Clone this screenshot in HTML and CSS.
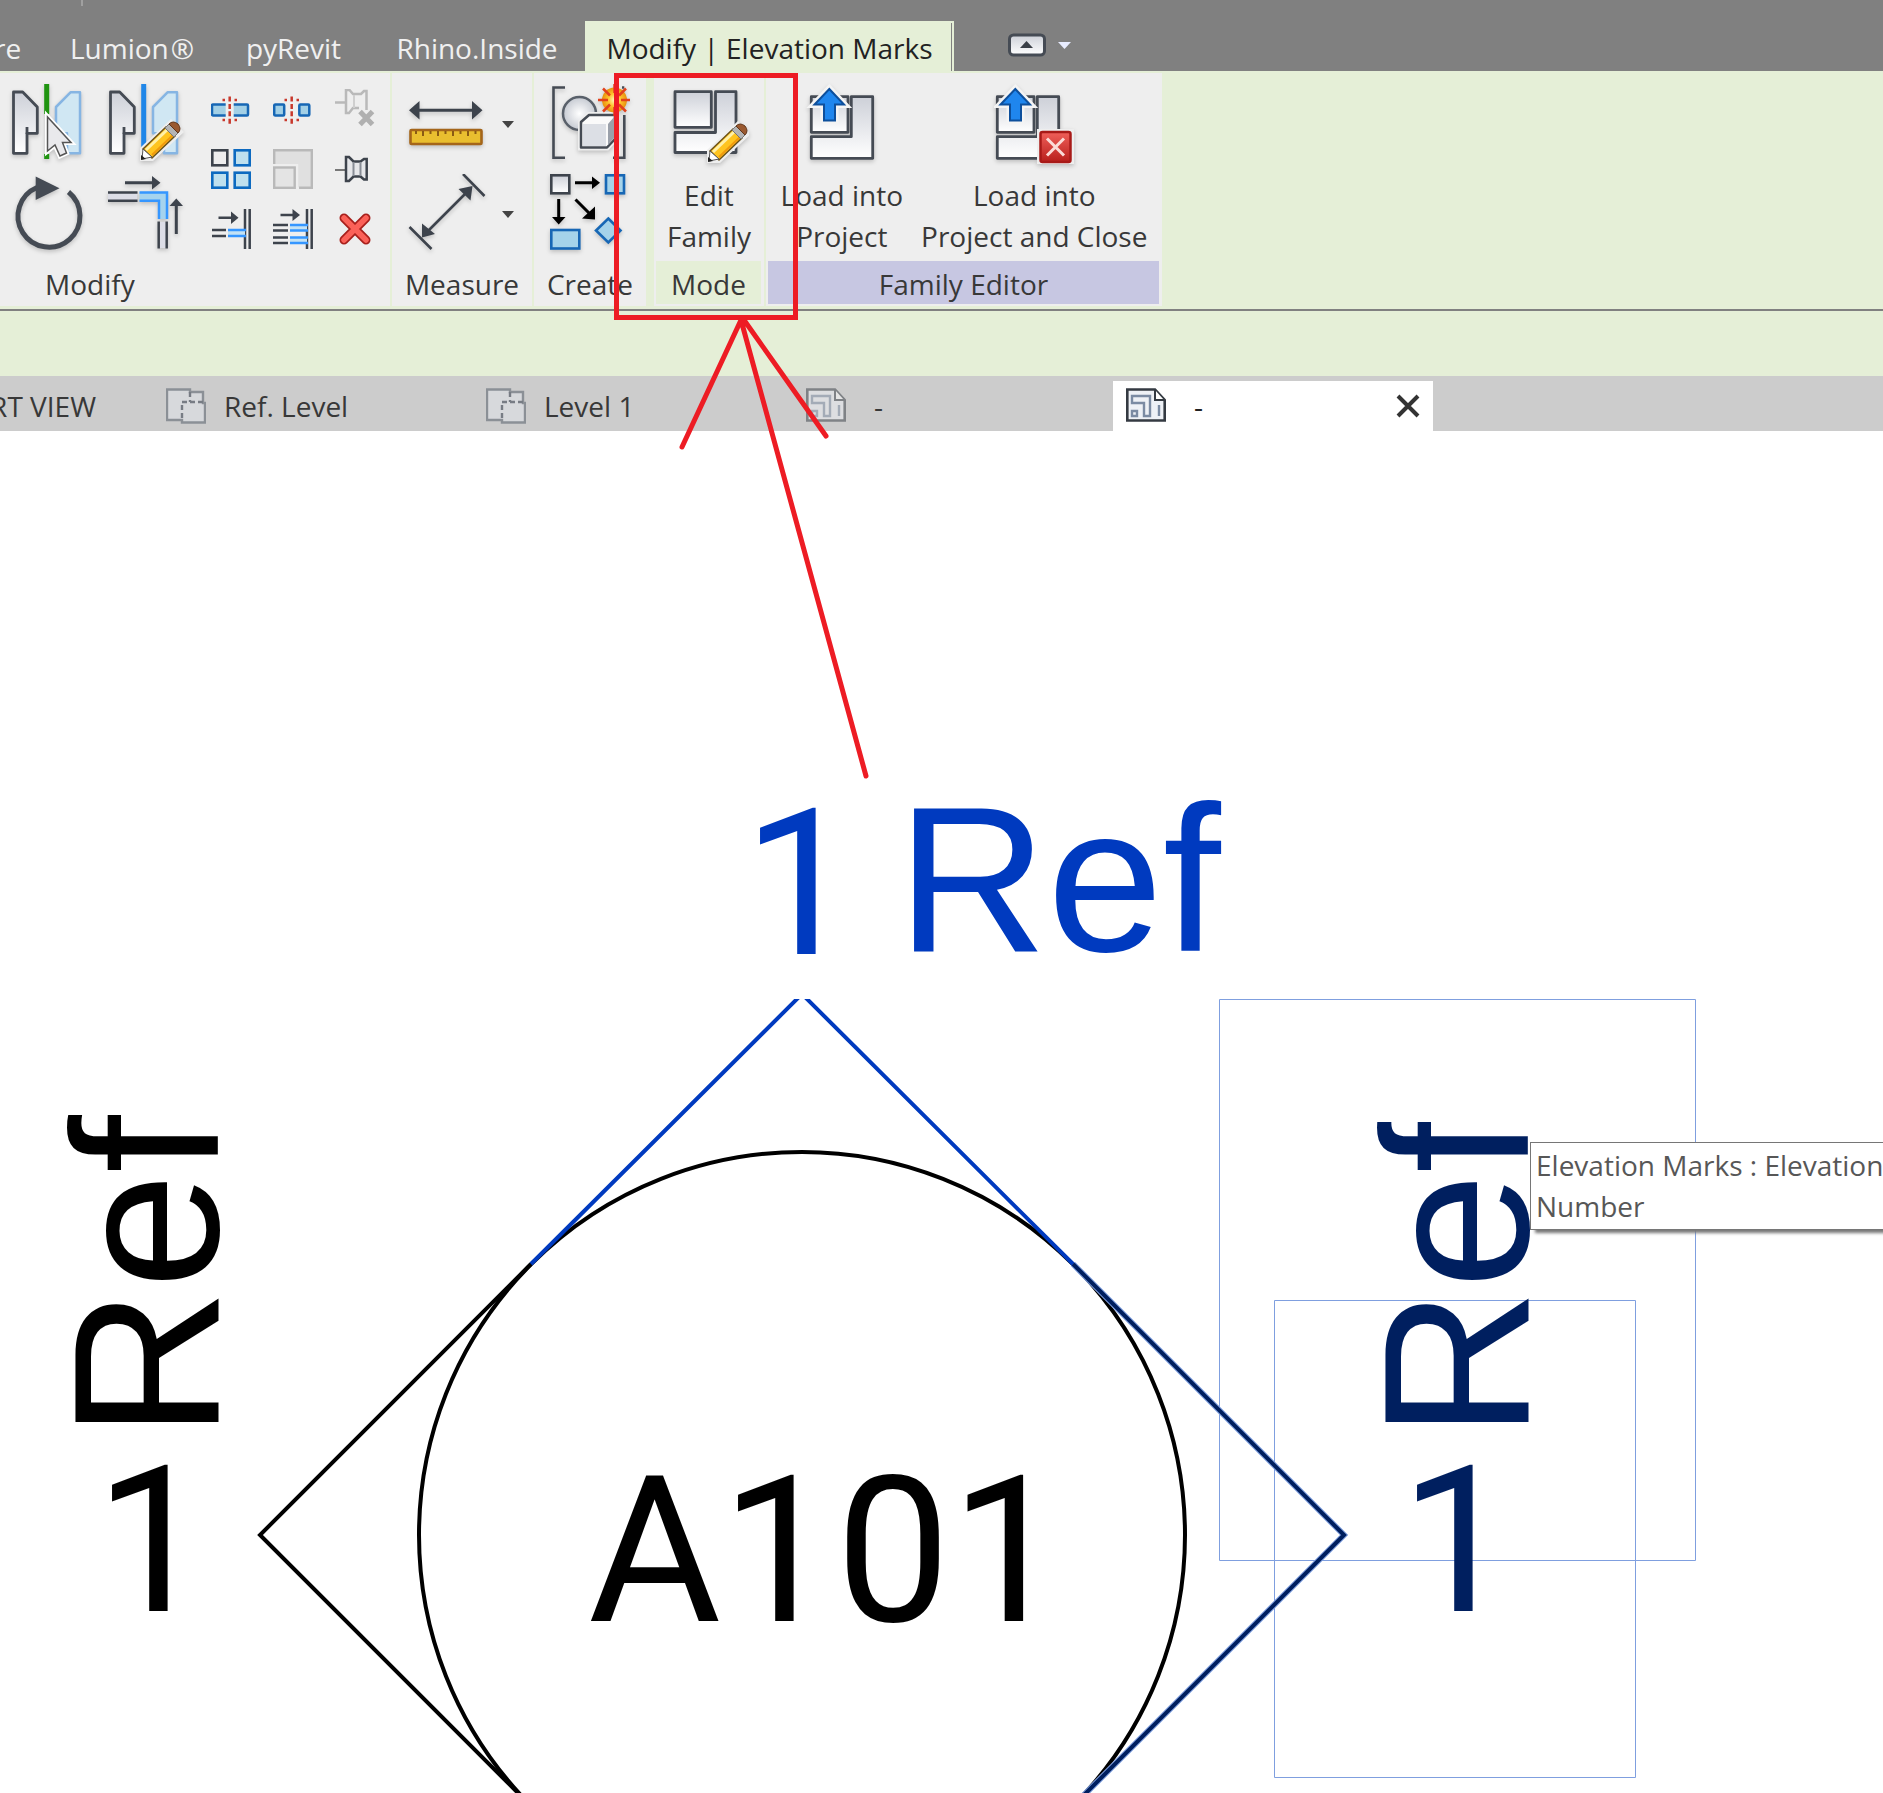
FILE: index.html
```
<!DOCTYPE html>
<html lang="en">
<head>
    <meta charset="UTF-8">
    <title>Elevation Marks</title>
    <link rel="stylesheet" href="styles.css">
</head>
<body>
    <!-- shared gradients and shapes -->
    <svg class="defs" aria-hidden="true">
        <defs>
            <linearGradient id="steel" x1="0" y1="0" x2="0" y2="1">
                <stop offset="0" stop-color="#cdd0d8"/>
                <stop offset="1" stop-color="#fff"/>
            </linearGradient>
            <linearGradient id="red" x1="0" y1="0" x2="0" y2="1">
                <stop offset="0" stop-color="#f0605a"/>
                <stop offset="1" stop-color="#b81f1c"/>
            </linearGradient>
            <radialGradient id="ball">
                <stop offset="0" stop-color="#fff"/>
                <stop offset="1" stop-color="#c6cad2"/>
            </radialGradient>
            <radialGradient id="sun">
                <stop offset="0" stop-color="#ffffc0"/>
                <stop offset="0.5" stop-color="#ffc52e"/>
                <stop offset="1" stop-color="#e8900c"/>
            </radialGradient>
            <g id="pencil">
                <path d="M35 77V64L66 35L79 48L48 77Z" fill="#eee"/>
                <path d="M38 65L61 43L70 52L47 74Z" fill="#ffc41f" stroke="#6b5118" stroke-width="1.500"/>
                <path d="M41 66L63 45" stroke="#fff0a8" stroke-width="3"/>
                <path d="M47 71L68 51" stroke="#f09a0c" stroke-width="2"/>
                <path d="M38 65L47 73L37 75Z" fill="#fff" stroke="#555" stroke-width="1"/>
                <path d="M36 76V71L41 75Z" fill="#222"/>
                <path d="M60 44L64 40L73 49L69 53Z" fill="#b4b4b4" stroke="#777"/>
                <path d="M64 40Q68 36 73 40Q77 45 73 49Z" fill="#9a5930" stroke="#60351a"/>
            </g>
            <g id="mirrorLeft">
                <path d="M5.5 8H14.7L29.3 23V49.3H19V69.3H5.5Z" fill="url(#steel)" stroke="#454b54" stroke-width="2.8" stroke-linejoin="round"/>
                <path d="M19 43V50" stroke="#454b54" stroke-width="2.8"/>
            </g>
            <path id="mirrorRight" d="M48 23L62.5 8.3H72V69.3H59V49.3H48Z" fill="#d0e7f3" stroke="#86b5e3" stroke-width="2.5" stroke-linejoin="round"/>
            <g id="loadArrow">
                <path d="M9.3 12.7H46V48.3H9.3Z" fill="url(#steel)" stroke="#454b54" stroke-width="2.8" stroke-linejoin="round"/>
                <path d="M49.3 12.7H70.7V74.3H9.3V52.7H49.3Z" fill="url(#steel)" stroke="#454b54" stroke-width="2.8" stroke-linejoin="round"/>
                <path d="M27.3 5L42 20.5H33V36.5H22V20.5H12.500Z" fill="#1f86ee" stroke="#f4f4f4" stroke-width="7"/>
                <path d="M27.3 5L42 20.5H33V36.5H22V20.5H12.500Z" fill="#1f86ee" stroke="#0d4f9c" stroke-width="2"/>
            </g>
        </defs>
    </svg>

    <header class="tabs">
        <span class="tick"></span>
        <button class="tab tab-cut">re</button>
        <button class="tab">Lumion<span class="reg">®</span></button>
        <button class="tab">pyRevit</button>
        <button class="tab">Rhino.Inside</button>
        <button class="tab active">Modify | Elevation Marks</button>
        <button class="collapse" aria-label="Collapse ribbon">
            <svg width="63" height="24" viewBox="0 0 63 24">
                <rect x="1.500" y="2" width="35" height="20" rx="4" fill="url(#steel)" stroke="#454b54" stroke-width="3"/>
                <path d="M12 15L18.500 8L25 15Z" fill="#3a3f47"/>
                <path d="M50 9H63L56.500 16Z" fill="#e8ecff"/>
            </svg>
        </button>
    </header>

    <main class="ribbon">
        <section class="panel modify">
            <div class="panel-body">
                <div class="big-icons">
                    <button aria-label="Mirror - Pick Axis">
                        <svg width="80" height="80">
                            <use href="#mirrorLeft"/><use href="#mirrorRight"/>
                            <path d="M38.700 0V30M38.700 70V75" stroke="#1f9410" stroke-width="5"/>
                            <path d="M39.500 33V67L47 61L52 72L58.500 69L54.500 58.500H63Z" fill="#e9e9ec" stroke="#fff" stroke-width="5"/>
                            <path d="M39.500 33V67L47 61L52 72L58.500 69L54.500 58.500H63Z" fill="#e9e9ec" stroke="#555" stroke-width="1.500"/>
                        </svg>
                    </button>
                    <button aria-label="Mirror - Draw Axis">
                        <svg width="80" height="80">
                            <use href="#mirrorLeft"/><use href="#mirrorRight"/>
                            <path d="M38.700 0V66" stroke="#1f86e8" stroke-width="5"/>
                            <use href="#pencil"/>
                        </svg>
                    </button>
                    <button aria-label="Rotate">
                        <svg width="80" height="80">
                            <path d="M60.500 18A31 31 0 1 1 29 13.500" fill="none" stroke="#454b54" stroke-width="5"/>
                            <path d="M27.700 2.500L51.500 14.300L27.700 26Z" fill="#454b54"/>
                        </svg>
                    </button>
                    <button aria-label="Trim/Extend to Corner">
                        <svg width="80" height="80">
                            <path d="M3 19H32V26H3ZM54 48H62V74H54Z" fill="#dcdde6"/>
                            <path d="M3 18.500H32.500M3 26.700H32.500M53.700 47.500V74.500M61.700 47.500V74.500" stroke="#3d434c" stroke-width="2.500"/>
                            <path d="M34.500 18.500H62V45H54V27H34.500Z" fill="#a5d3ee"/>
                            <path d="M34.500 18.500H62V45M34.500 26.700H54V45" fill="none" stroke="#3596ff" stroke-width="2.500"/>
                            <path d="M20 8.700H48M71.300 60V32" stroke="#3d434c" stroke-width="3"/>
                            <path d="M47 2L55.500 8.700L47 15.500ZM64.500 32L71.300 24.500L78 32Z" fill="#3d434c"/>
                        </svg>
                    </button>
                </div>
                <div class="small-icons">
                    <button aria-label="Split Element">
                        <svg width="40" height="40">
                            <rect x="1" y="15.500" width="36" height="11" rx="1" fill="#a3d0e6" stroke="#1767b5" stroke-width="2.500"/>
                            <path d="M18.700 12V30" stroke="#eee" stroke-width="8"/>
                            <path d="M18.700 7.500V35" stroke="#c8382c" stroke-width="2.500" stroke-dasharray="5 2.400"/>
                            <path d="M11.500 11H14M23.500 11H26M11.500 31H14M23.500 31H26" stroke="#c8382c" stroke-width="2.500"/>
                        </svg>
                    </button>
                    <button aria-label="Split with Gap">
                        <svg width="40" height="40">
                            <rect x="1.200" y="15.500" width="10" height="11" rx="1" fill="#a3d0e6" stroke="#1767b5" stroke-width="2.500"/>
                            <rect x="26.300" y="15.500" width="10" height="11" rx="1" fill="#a3d0e6" stroke="#1767b5" stroke-width="2.500"/>
                            <path d="M18.700 7.500V35" stroke="#c8382c" stroke-width="2.500" stroke-dasharray="5 2.400"/>
                            <path d="M11.500 11H14M23.500 11H26M11.500 31H14M23.500 31H26" stroke="#c8382c" stroke-width="2.500"/>
                        </svg>
                    </button>
                    <button aria-label="Unpin" disabled>
                        <svg width="40" height="40">
                            <path d="M0 13.500H10M11 1H14.500L18 5H26L29 2H31.500V21M11 0V24H14L18 19H24" fill="none" stroke="#b9b9b9" stroke-width="2.500"/>
                            <path d="M19 6V19" stroke="#cfcfcf" stroke-width="2"/>
                            <path d="M25 22.500L37.500 35.500M37.500 22.500L25 35.500" stroke="#b0b0b0" stroke-width="5"/>
                        </svg>
                    </button>
                    <button aria-label="Array">
                        <svg width="40" height="40">
                            <rect x="1.300" y="1.300" width="15" height="15" fill="#eee" stroke="#3d434c" stroke-width="2.600"/>
                            <g fill="#bfe0ee" stroke="#0d6ac0" stroke-width="2.600">
                                <rect x="23.700" y="1.300" width="15" height="15"/>
                                <rect x="1.300" y="23.700" width="15" height="15"/>
                                <rect x="23.700" y="23.700" width="15" height="15"/>
                            </g>
                        </svg>
                    </button>
                    <button aria-label="Scale" disabled>
                        <svg width="40" height="40">
                            <path d="M1.200 15V1.200H38.800V38.800H26" fill="#e0e0e0" stroke="#b9b9b9" stroke-width="2.400"/>
                            <rect x="1.200" y="18.500" width="20.500" height="20.300" fill="#e4e4e4" stroke="#eee" stroke-width="7"/>
                            <rect x="1.200" y="18.500" width="20.500" height="20.300" fill="#e4e4e4" stroke="#b9b9b9" stroke-width="2.400"/>
                        </svg>
                    </button>
                    <button aria-label="Pin">
                        <svg width="40" height="40">
                            <path d="M0 21H10" stroke="#777" stroke-width="2"/>
                            <path d="M11 8H14L18.500 12.500H25.500L29 10H31.700V30.500H29L25.500 27.500H18.500L14 32H11Z" fill="#e6e7ea" stroke="#3d434c" stroke-width="2.500"/>
                            <path d="M18.500 13V27M25.500 13V27" stroke="#888d96" stroke-width="2"/>
                        </svg>
                    </button>
                    <button aria-label="Trim/Extend Single Element">
                        <svg width="40" height="40">
                            <path d="M34 0V40M38.700 0V40M1 21H15M1 27H15M7.500 8.700H22" stroke="#3d434c" stroke-width="2.500"/>
                            <path d="M20 2.500L27.500 8.700L20 15Z" fill="#3d434c"/>
                            <path d="M17 20H34V28H17Z" fill="#c3e2f5"/>
                            <path d="M17 21H35M17 27H35" stroke="#3596ff" stroke-width="2.500"/>
                        </svg>
                    </button>
                    <button aria-label="Trim/Extend Multiple Elements">
                        <svg width="40" height="40">
                            <path d="M34 0V40M38.700 0V40M0 16H15M0 21.500H15M0 28.500H15M0 34H15M7.500 6H21" stroke="#3d434c" stroke-width="2.500"/>
                            <path d="M19.500 0L27 6L19.500 12Z" fill="#3d434c"/>
                            <path d="M17 15H34V22H17ZM17 28H34V35H17Z" fill="#c3e2f5"/>
                            <path d="M17 16H35M17 21.500H35M17 28.500H35M17 34H35" stroke="#3596ff" stroke-width="2.500"/>
                        </svg>
                    </button>
                    <button aria-label="Delete">
                        <svg width="40" height="40">
                            <path d="M9 9L31 31M31 9L9 31" stroke="#a8201c" stroke-width="9" stroke-linecap="round"/>
                            <path d="M9 9L31 31M31 9L9 31" stroke="#fb6158" stroke-width="5.500" stroke-linecap="round"/>
                        </svg>
                    </button>
                </div>
            </div>
            <h2 class="panel-title">Modify</h2>
        </section>

        <section class="panel measure">
            <div class="panel-body">
                <button class="split" aria-label="Measure Between Two References">
                    <svg width="80" height="80">
                        <path d="M12 26.300H66" stroke="#3d434c" stroke-width="3"/>
                        <path d="M2 26.300L12.500 17V35.500ZM75.500 26.300L65 17V35.500Z" fill="#3d434c"/>
                        <rect x="3.500" y="46" width="71" height="14" rx="1" fill="#e9be2f" stroke="#a4651a" stroke-width="2.600"/>
                        <path d="M9 47V50M16 47V52M23.500 47V50M31 47V52M38.500 47V50M46 47V52M53.500 47V50M61 47V52M68.500 47V50" stroke="#8a5a14" stroke-width="2"/>
                    </svg>
                    <svg class="drop" width="12" height="7"><path d="M0 0H12L6 7Z" fill="#444"/></svg>
                </button>
                <button class="split" aria-label="Aligned Dimension">
                    <svg width="80" height="80">
                        <path d="M56 0L77.500 22M2.500 53L24.500 75M18 60L62 16" stroke="#3d434c" stroke-width="2.600"/>
                        <path d="M65.500 12L51.500 15L63.500 26.500ZM15 49.500V63.500L28 60Z" fill="#3d434c"/>
                    </svg>
                    <svg class="drop" width="12" height="7"><path d="M0 0H12L6 7Z" fill="#444"/></svg>
                </button>
            </div>
            <h2 class="panel-title">Measure</h2>
        </section>

        <section class="panel create">
            <div class="panel-body">
                <button aria-label="Create Group">
                    <svg width="80" height="80">
                        <path d="M15 3.500H3.500V73.700H15M63 73.700H74.300V31M72 3.500H74.300" fill="none" stroke="#454b54" stroke-width="2.600"/>
                        <circle cx="29.500" cy="29.500" r="16.500" fill="url(#ball)" stroke="#59606a" stroke-width="2.500"/>
                        <path d="M31 38L39 31H65V55L57 63.500H31Z" fill="#e6e8ec" stroke="#eee" stroke-width="6"/>
                        <path d="M31 38L39 31H65V55L57 63.500H31Z" fill="#fafafa" stroke="#454b54" stroke-width="2.500" stroke-linejoin="round"/>
                        <path d="M33 40H56V62H33Z" fill="#dcdfe5"/>
                        <path d="M58 40L64 33V54L58 61Z" fill="#9aa0aa"/>
                        <circle cx="64.500" cy="16" r="12.500" fill="url(#sun)"/>
                        <path d="M64.500 0V9M64.500 23V32M48 16H58M71 16H80M53 4.500L60 11.500M76 4.500L69 11.500M53 27.500L60 20.500M76 27.500L69 20.500" stroke="#e2401c" stroke-width="2.500"/>
                    </svg>
                </button>
                <button aria-label="Create Similar">
                    <svg width="80" height="80">
                        <rect x="1.300" y="1.300" width="18" height="18" fill="url(#steel)" stroke="#3d434c" stroke-width="2.600"/>
                        <g fill="#a5d3ea" stroke="#1767b5" stroke-width="2.600">
                            <rect x="56" y="1.300" width="18" height="18"/>
                            <rect x="1.300" y="56" width="28" height="18.500"/>
                            <path d="M58.300 44.500L70.500 56.500L58.300 68.500L46 56.500Z"/>
                        </g>
                        <path d="M25 8.700H43M8.700 25V44M25.500 25.500L40 40" stroke="#000" stroke-width="3"/>
                        <path d="M42 2.500L50 8.700L42 15ZM2 43H15.500L8.700 50.500ZM45 32.500V45.500L32 44.500Z"/>
                    </svg>
                </button>
            </div>
            <h2 class="panel-title">Create</h2>
        </section>

        <section class="panel mode">
            <div class="panel-body">
                <button class="large">
                    <svg width="80" height="80">
                        <path d="M6 7.700H42.300V43.300H6Z" fill="url(#steel)" stroke="#454b54" stroke-width="2.800" stroke-linejoin="round"/>
                        <path d="M46.500 7.700H67V68.500H6V48.500H46.500Z" fill="url(#steel)" stroke="#454b54" stroke-width="2.800" stroke-linejoin="round"/>
                        <use href="#pencil" x="3" y="2"/>
                    </svg>
                    Edit<br>Family
                </button>
            </div>
            <h2 class="panel-title">Mode</h2>
        </section>

        <section class="panel editor">
            <div class="panel-body">
                <button class="large">
                    <svg width="80" height="80"><use href="#loadArrow"/></svg>
                    Load into<br>Project
                </button>
                <button class="large">
                    <svg width="80" height="80">
                        <use href="#loadArrow" x="-6"/>
                        <rect x="43" y="45" width="37" height="35" fill="#eee"/>
                        <rect x="46.500" y="48" width="30" height="30" rx="2" fill="url(#red)" stroke="#a81a18" stroke-width="2.500"/>
                        <path d="M53 54.500L70 71.500M70 54.500L53 71.500" stroke="#fbdcd8" stroke-width="3"/>
                    </svg>
                    Load into<br>Project and Close
                </button>
            </div>
            <h2 class="panel-title">Family Editor</h2>
        </section>
    </main>

    <div class="options-bar"></div>

    <!-- open views -->
    <nav class="views">
        <button class="view view-cut">RT VIEW</button>
        <button class="view">
            <svg width="40" height="36">
                <path d="M1 1.500H24V4H37V15H39V34.500H16V32H1Z" fill="#d7d9dc" stroke="#8b9096" stroke-width="2.400"/>
                <path d="M24 4V14M37 14H16V32" fill="none" stroke="#777c84" stroke-width="2.400" stroke-dasharray="5 3"/>
            </svg>
            Ref. Level
        </button>
        <button class="view">
            <svg width="40" height="36">
                <path d="M1 1.500H24V4H37V15H39V34.500H16V32H1Z" fill="#d7d9dc" stroke="#8b9096" stroke-width="2.400"/>
                <path d="M24 4V14M37 14H16V32" fill="none" stroke="#777c84" stroke-width="2.400" stroke-dasharray="5 3"/>
            </svg>
            Level 1
        </button>
        <button class="view sheet">
            <svg width="40" height="36" opacity="0.5">
                <path d="M1.300 1.500H29L38.700 12V32.500H1.300Z" fill="#eef1f6" stroke="#343a42" stroke-width="2.600"/>
                <path d="M29 2V12H38" fill="#fff" stroke="#343a42" stroke-width="2"/>
                <path d="M6 8H24V28H18V15H6ZM6 23H11V28H6ZM33 17V28" fill="none" stroke="#7b8ba3" stroke-width="2.400"/>
            </svg>
            -
        </button>
        <div class="view sheet current">
            <svg width="40" height="36">
                <path d="M1.300 1.500H29L38.700 12V32.500H1.300Z" fill="#eef1f6" stroke="#343a42" stroke-width="2.600"/>
                <path d="M29 2V12H38" fill="#fff" stroke="#343a42" stroke-width="2"/>
                <path d="M6 8H24V28H18V15H6ZM6 23H11V28H6ZM33 17V28" fill="none" stroke="#7b8ba3" stroke-width="2.400"/>
            </svg>
            -
            <button class="close" aria-label="Close view">
                <svg width="24" height="24"><path d="M2 2L22 22M22 2L2 22" stroke="#333" stroke-width="4"/></svg>
            </button>
        </div>
    </nav>

    <div class="canvas">
        <svg class="drawing">
            <clipPath id="markClip"><rect x="-600" y="-536" width="1200" height="600"/></clipPath>
            <clipPath id="refClip"><rect x="560" y="-413" width="200" height="400"/></clipPath>
            <!-- origin is the centre of the elevation mark -->
            <g transform="translate(802 1104)">
                <g fill="none" stroke="#7f9fdf">
                    <path d="M417.500 -535.500H893.500V25.500H417.500Z"/>
                    <path d="M472.500 -234.500H833.500V242.500H472.500Z"/>
                </g>
                <circle r="383" fill="none" stroke="#000" stroke-width="4"/>
                <path d="M-271 -271L-542 0L-271 271" fill="none" stroke="#000" stroke-width="4"/>
                <path d="M271 -271L542 0L271 271" fill="none" stroke="#7f9fdf" stroke-width="6"/>
                <path d="M271 -271L542 0L271 271" fill="none" stroke="#001f5f" stroke-width="4"/>
                <path d="M-271 -271L0 -541L271 -271" fill="none" stroke="#003abf" stroke-width="4" clip-path="url(#markClip)"/>

                <text class="digit" x="-214" y="86">A101</text>
                <g class="blue">
                    <text class="digit" x="-59" y="-581">1</text>
                    <text class="ref" x="95" y="-584">Ref</text>
                </g>
                <text class="digit" x="-707" y="76">1</text>
                <text class="ref" transform="translate(-584 -96) rotate(-90)">Ref</text>
                <g class="navy">
                    <text class="digit" x="598" y="76">1</text>
                    <g clip-path="url(#refClip)">
                        <text class="ref" transform="translate(726 -96) rotate(-90)">Ref</text>
                    </g>
                </g>
            </g>
        </svg>
        <div class="tooltip" role="tooltip">Elevation Marks : Elevation<br>Number</div>
    </div>

    <!-- red markup over the ribbon -->
    <svg class="markup">
        <rect x="616.500" y="75.500" width="179" height="242"/>
        <path d="M741 320L682 447M741 320L866 776M744 320L826 436"/>
    </svg>
</body>
</html>
```
FILE: styles.css
```
* { box-sizing: border-box; }
body { margin: 0; height: 100vh; display: flex; flex-direction: column; position: relative; overflow: hidden; background: #fff; color: #383838; font: 28px/41px "Open Sans", "Noto Sans", sans-serif; }
button { background: none; border: 0; padding: 0; margin: 0; color: inherit; font: inherit; cursor: pointer; }
svg { display: block; flex: none; }
.defs { position: absolute; width: 0; height: 0; }

/* ribbon tabs */
.tabs { position: relative; display: grid; grid-template-columns: 46px 172px 151px 216px 369px auto; justify-content: start; height: 71px; padding-top: 21px; background: #808080; }
.tick { position: absolute; left: 81px; top: 0; width: 2px; height: 6px; background: #a0a0a0; }
.tab { padding-top: 4px; color: #f0f0f0; white-space: nowrap; }
.tab-cut { margin-left: -6px; text-align: left; }
.reg { padding-left: 2px; }
.tab.active { position: relative; background: #e5efd7; color: #222; }
.tab.active::after { content: ""; position: absolute; right: 2px; top: 2px; bottom: 0; width: 1px; background: #808080; }
.collapse { padding: 0 0 2px 54px; }

/* ribbon panels */
.ribbon { display: flex; gap: 2px; height: 240px; padding: 2px 0 3px; background: #e5efd7; border-bottom: 2px solid #808080; }
.panel { display: flex; flex-direction: column; height: 233px; background: #eee; }
.panel-body { flex: 1; display: flex; padding-top: 11px; }
.panel-body svg { filter: drop-shadow(0 2px 2px rgba(0, 0, 0, 0.2)); }
.panel-body .small-icons svg, .panel-body .drop { filter: none; }
.panel-title { height: 45px; margin: 0; padding-top: 3px; font-size: 28px; line-height: 41px; font-weight: normal; text-align: center; }
.modify { width: 390px; }
.modify .panel-body { padding-left: 8px; gap: 26px; }
.modify .panel-title { padding-left: 45px; text-align: left; }
.big-icons { display: grid; grid-template-columns: 80px 80px; gap: 10px 17px; align-content: start; }
.small-icons { display: grid; grid-template-columns: repeat(3, 40px); gap: 20px 22px; align-content: start; padding-top: 5px; }
.measure { width: 140px; }
.measure .panel-body, .create .panel-body { flex-direction: column; gap: 10px; padding-left: 15px; }
.split { display: flex; align-items: center; gap: 15px; }
.create { width: 112px; margin-right: 6px; }
.create .panel-body { padding-left: 16px; }
.large { display: flex; flex-direction: column; align-items: center; text-align: center; white-space: nowrap; line-height: 41px; }
.large svg { margin-bottom: 11px; }
.mode { width: 110px; }
.mode .panel-body, .editor .panel-body { justify-content: center; align-items: flex-start; gap: 18px; }
.mode .panel-title, .editor .panel-title { margin: 0 3px 0 2px; border-bottom: 2px solid #eee; }
.mode .panel-title { background: #e5efd7; }
.editor { width: 396px; }
.editor .panel-title { background: #c7c7e2; }
.options-bar { height: 65px; background: #e5efd7; }

/* view tabs */
.views { display: flex; height: 55px; padding-top: 5px; background: #ccc; }
.view { display: flex; align-items: center; gap: 18px; width: 320px; padding: 0 13px; white-space: nowrap; }
.view.sheet { gap: 28px; }
.view-cut { width: 153px; padding-right: 57px; justify-content: flex-end; }
.view.current { background: #fff; color: #222; }
.close { margin-left: auto; }

/* drawing area */
.canvas { position: relative; flex: 1; overflow: hidden; }
.drawing { width: 100%; height: 100%; }
.digit { font: 204px Roboto, sans-serif; }
.ref { font: 208px "Liberation Sans", Arial, sans-serif; }
.blue { fill: #003abf; }
.navy { fill: #001f5f; }
.tooltip { position: absolute; left: 1530px; top: 711px; width: 420px; padding: 2px 5px; background: #fff; border: 1px solid #767676; box-shadow: 4px 4px 3px -1px #777; color: #575757; white-space: nowrap; }

.markup { position: absolute; left: 0; top: 0; width: 100%; height: 100%; fill: none; stroke: #ed1c24; stroke-width: 5; stroke-linecap: round; pointer-events: none; }
```
